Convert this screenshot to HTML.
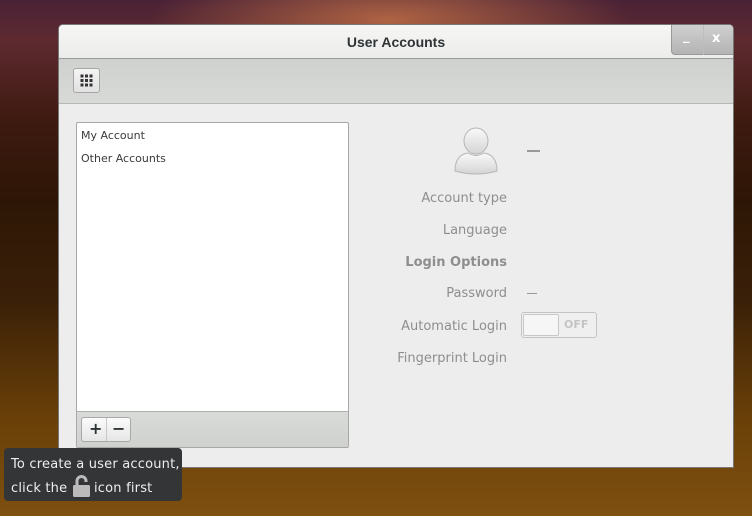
<!DOCTYPE html>
<html><head><style>
*{margin:0;padding:0;box-sizing:border-box}
body{width:752px;height:516px;overflow:hidden;position:relative;font-family:"DejaVu Sans","Liberation Sans",sans-serif;
background:
radial-gradient(ellipse 240px 60px at 390px 20px, rgba(190,110,70,0.85), rgba(190,110,70,0) 100%),
linear-gradient(180deg,#4a2236 0px,#5e2a30 40px,#3e1a10 120px,#2e1606 200px,#3a2008 300px,#6a4008 420px,#7e5010 516px);}
.win{position:absolute;left:58px;top:24px;width:676px;height:444px;background:#ededed;border:1px solid #777;border-radius:5px 5px 0 0;overflow:hidden}
.title{height:34px;background:linear-gradient(#f6f6f5,#ececeb);border-bottom:1px solid #9a9a9a;text-align:center;font-family:"Liberation Sans",sans-serif;font-size:14px;font-weight:bold;line-height:34px;color:#2e3436}
.tb{height:45px;background:linear-gradient(#cfd1ce,#d8dad7);border-bottom:1px solid #b8b8b8;position:relative}
.gridbtn{position:absolute;left:14px;top:9px;width:27px;height:25px;border:1px solid #a6a6a6;border-radius:3px;background:linear-gradient(#f4f4f4,#e2e2e2)}
.wb{position:absolute;top:0;right:0;width:62px;height:30px;background:linear-gradient(#cfcfcf,#b4b4b4);border-left:1px solid #999;border-bottom:1px solid #999;border-radius:0 0 0 4px}
.wb span{position:absolute;color:#fff;font-weight:bold;font-size:13px;top:6px}
.list{position:absolute;left:17px;top:97px;width:273px;height:326px;border:1px solid #a8a8a8;border-radius:2px;background:#fff;overflow:hidden}
.list .it{font-size:11px;color:#3a3a3a;padding-left:4px;height:23px;line-height:23px}
.lt{position:absolute;left:0;bottom:0;width:100%;height:36px;background:linear-gradient(#d9dbd8,#cfd1ce);border-top:1px solid #b0b0b0}
.pm{position:absolute;left:4px;top:5px;width:50px;height:25px;border:1px solid #a8a8a8;border-radius:3px;background:linear-gradient(#fbfbfb,#e6e6e6);font-size:16px;font-weight:bold;color:#2e3436}
.lab{position:absolute;right:226px;font-size:13px;color:#8e8e8e;text-align:right;white-space:nowrap}
.tip{position:absolute;left:4px;top:448px;width:178px;height:53px;background:#333537;border-radius:4px;color:#eee;font-size:13px;line-height:21px;padding:6px 0 0 7px;letter-spacing:0.2px}
</style></head><body>
<div class="win">
 <div class="title">User Accounts</div>
 <div class="wb"><span style="left:11px;top:4px">_</span><div style="position:absolute;left:31px;top:0;width:1px;height:30px;background:#bdbdbd"></div><span style="left:40px">x</span></div>
 <div class="tb"><div class="gridbtn">
  <svg width="27" height="25" viewBox="0 0 27 25" style="position:absolute;left:-1px;top:-1px" fill="#333">
   <rect x="7.5" y="6.5" width="3" height="3"/><rect x="12" y="6.5" width="3" height="3"/><rect x="16.5" y="6.5" width="3" height="3"/>
   <rect x="7.5" y="11" width="3" height="3"/><rect x="12" y="11" width="3" height="3"/><rect x="16.5" y="11" width="3" height="3"/>
   <rect x="7.5" y="15.5" width="3" height="3"/><rect x="12" y="15.5" width="3" height="3"/><rect x="16.5" y="15.5" width="3" height="3"/>
  </svg></div></div>
 <div class="list">
  <div class="it" style="margin-top:1px">My Account</div>
  <div class="it">Other Accounts</div>
  <div class="lt"><div class="pm"><span style="position:absolute;left:7px;top:1px">+</span><div style="position:absolute;left:24px;top:0;width:1px;height:23px;background:#c8c8c8"></div><span style="position:absolute;left:30px;top:1px">−</span></div></div>
 </div>
 <svg style="position:absolute;left:394px;top:102px" width="46" height="48" viewBox="0 0 46 48">
  <defs><linearGradient id="g" x1="0" y1="0" x2="0" y2="1"><stop offset="0" stop-color="#fafafa"/><stop offset="1" stop-color="#d4d4d4"/></linearGradient></defs>
  <path d="M2 44 Q2 28 15 26 Q23 31 31 26 Q44 28 44 44 Q23 50 2 44 Z" fill="url(#g)" stroke="#b5b5b5"/>
  <ellipse cx="23" cy="14" rx="12" ry="13" fill="url(#g)" stroke="#b5b5b5"/>
 </svg>
 <div style="position:absolute;left:468px;top:125px;width:13px;height:2px;background:#999"></div>
 <div class="lab" style="top:166px">Account type</div>
 <div class="lab" style="top:198px">Language</div>
 <div class="lab" style="top:230px;font-weight:bold">Login Options</div>
 <div class="lab" style="top:261px">Password</div>
 <div style="position:absolute;left:468px;top:268px;width:10px;height:1px;background:#999"></div>
 <div class="lab" style="top:294px">Automatic Login</div>
 <div style="position:absolute;left:462px;top:287px;width:76px;height:26px;border:1px solid #c4c4c4;border-radius:3px;background:#efefef">
  <div style="position:absolute;left:1px;top:1px;width:36px;height:22px;border:1px solid #c8c8c8;border-radius:2px;background:#f6f6f6"></div>
  <span style="position:absolute;left:42px;top:5px;font-size:11px;font-weight:bold;color:#c4c4c4">OFF</span></div>
 <div class="lab" style="top:326px">Fingerprint Login</div>
</div>
<div class="tip">To create a user account,<br>click the <svg width="18" height="22" viewBox="0 0 18 22" style="vertical-align:-5px"><path d="M5 10 V6 A4.5 4.5 0 0 1 14 6 V7" fill="none" stroke="#bbb" stroke-width="3"/><rect x="1" y="10" width="17" height="12" rx="1.5" fill="#bbb"/></svg> icon first</div>
</body></html>
